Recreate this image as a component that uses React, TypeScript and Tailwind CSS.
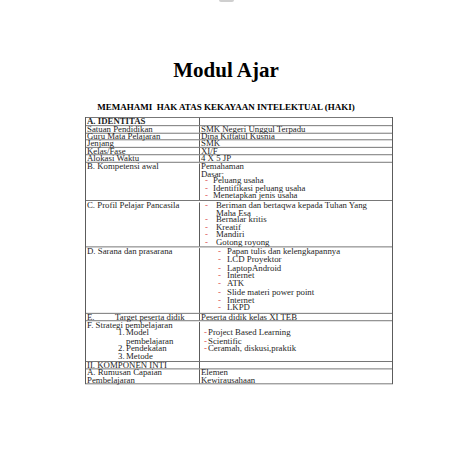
import type { ReactNode } from 'react'

const serif = "font-['Liberation_Serif','Times_New_Roman',serif]"

function Row({ left, right, className = '' }: { left: ReactNode; right: ReactNode; className?: string }) {
  return (
    <div className={`flex border-t border-[#5c5c5c] first:border-t-0 ${className}`}>
      <div className="w-[114px] shrink-0 border-r border-[#5c5c5c] pl-[1px]">{left}</div>
      <div className="flex-1 pl-[1px]">{right}</div>
    </div>
  )
}

function Bullet({ children, pad, gap }: { children: ReactNode; pad: string; gap: string }) {
  return (
    <div className={`flex ${pad}`}>
      <span className={`shrink-0 text-[#d9443f] ${gap}`}>-</span>
      <span>{children}</span>
    </div>
  )
}

function Numbered({ n, lines }: { n: string; lines: string[] }) {
  return (
    <div className="flex pl-[31px]">
      <span className="w-[8px] shrink-0">{n}</span>
      <div>
        {lines.map((l) => (
          <div key={l}>{l}</div>
        ))}
      </div>
    </div>
  )
}

export default function App() {
  const kompetensi = ['Peluang usaha', 'Identifikasi peluang usaha', 'Menetapkan jenis usaha']
  const profil = ['Bernalar kritis', 'Kreatif', 'Mandiri', 'Gotong royong']
  const sarana = [
    'Papan tulis dan kelengkapannya',
    'LCD Proyektor',
    'LaptopAndroid',
    'Internet',
    'ATK',
    'Slide materi power point',
    'Internet',
    'LKPD',
  ]
  const strategi = ['Project Based Learning', 'Scientific', 'Ceramah, diskusi,praktik']

  return (
    <div className={`w-[452px] h-[452px] overflow-hidden bg-white text-[#1e1e1e] ${serif}`}>
      <div className="mx-auto h-[2px] w-[15px] rounded-b-full bg-[#cfcfcf]" />

      <h1 className="mt-[56px] text-center text-[21px] font-bold leading-[24px] text-black">Modul Ajar</h1>

      <h2 className="mt-[20px] text-center text-[9px] font-bold leading-[10px] text-black whitespace-pre">
        MEMAHAMI  HAK ATAS KEKAYAAN INTELEKTUAL (HAKI)
      </h2>

      {/* the scan is squashed vertically, so the table is drawn tall and scaled down */}
      <div className="ml-[85px] mt-[5px] w-[308px] origin-top scale-y-[0.83] border border-[#5c5c5c] text-[8.8px] leading-[8.8px]">
        <Row left={<span className="font-bold">A. IDENTITAS</span>} right={null} className="h-[8.8px]" />
        <Row left="Satuan Pendidikan" right="SMK Negeri Unggul Terpadu" className="h-[8.8px]" />
        <Row left="Guru Mata Pelajaran" right="Dina Kiftatul Kusnia" className="h-[8.8px]" />
        <Row left="Jenjang" right="SMK" className="h-[8.8px]" />
        <Row left="Kelas/Fase" right="XI/F" className="h-[8.8px]" />
        <Row left="Alokasi Waktu" right="4 X 5 JP" className="h-[8.8px]" />
        <Row
          className="h-[46px] pt-[1px]"
          left="B. Kompetensi awal"
          right={
            <div>
              <div>Pemahaman</div>
              <div>Dasar:</div>
              {kompetensi.map((k) => (
                <Bullet key={k} pad="pl-[4px]" gap="w-[8px]">
                  {k}
                </Bullet>
              ))}
            </div>
          }
        />
        <Row
          className="h-[56.5px] pt-[2px]"
          left="C. Profil Pelajar Pancasila"
          right={
            <div>
              <div className="flex pl-[4px]">
                <span className="w-[11px] shrink-0 text-[#d9443f]">-</span>
                <span>
                  Beriman dan bertaqwa kepada Tuhan Yang
                  <br />
                  Maha Esa
                </span>
              </div>
              {profil.map((p) => (
                <Bullet key={p} pad="pl-[4px]" gap="w-[11px]">
                  {p}
                </Bullet>
              ))}
            </div>
          }
        />
        <Row
          className="h-[79.5px] pt-[1px] leading-[9.7px]"
          left="D. Sarana dan prasarana"
          right={
            <div>
              {sarana.map((s, i) => (
                <Bullet key={i} pad="pl-[17px]" gap="w-[9px]">
                  {s}
                </Bullet>
              ))}
            </div>
          }
        />
        <Row
          className="h-[8.8px]"
          left={
            <div className="flex">
              <span className="w-[28px]">E.</span>
              <span>Target peserta didik</span>
            </div>
          }
          right="Peserta didik kelas XI TEB"
        />
        <Row
          className="h-[49.5px] pt-[1px] leading-[9.6px]"
          left={
            <div>
              <div>F. Strategi pembelajaran</div>
              <Numbered n="1." lines={['Model', 'pembelajaran']} />
              <Numbered n="2." lines={['Pendekatan']} />
              <Numbered n="3." lines={['Metode']} />
            </div>
          }
          right={
            <div className="pt-[9.6px]">
              {strategi.map((s) => (
                <Bullet key={s} pad="pl-[3px]" gap="w-[4px]">
                  {s}
                </Bullet>
              ))}
            </div>
          }
        />
        <Row className="h-[8.8px]" left="II. KOMPONEN INTI" right={null} />
        <Row
          className="h-[18px]"
          left={
            <div>
              <div>A. Rumusan Capaian</div>
              <div>Pembelajaran</div>
            </div>
          }
          right={
            <div>
              <div>Elemen</div>
              <div>Kewirausahaan</div>
            </div>
          }
        />
      </div>
    </div>
  )
}
